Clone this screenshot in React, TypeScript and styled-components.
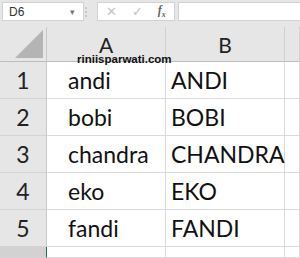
import styled, { createGlobalStyle } from "styled-components";

const rows = [
  ["andi", "ANDI"],
  ["bobi", "BOBI"],
  ["chandra", "CHANDRA"],
  ["eko", "EKO"],
  ["fandi", "FANDI"],
];

function App() {
  return (
    <Sheet>
      <GlobalStyle />
      <FormulaBar>
        <NameBox>
          <span>D6</span>
          <Caret>▾</Caret>
        </NameBox>
        <Grip />
        <ButtonBox>
          <BarIcon>✕</BarIcon>
          <BarIcon>✓</BarIcon>
          <FxIcon>
            f<sub>x</sub>
          </FxIcon>
        </ButtonBox>
        <FormulaInput />
      </FormulaBar>
      <Grid>
        <Corner>
          <Triangle />
        </Corner>
        <ColHead>A</ColHead>
        <ColHead>B</ColHead>
        <ColHead />
        {rows.map((r, i) => (
          <Row key={i}>
            <RowHead>{i + 1}</RowHead>
            <Cell indent>{r[0]}</Cell>
            <Cell>{r[1]}</Cell>
            <Cell />
          </Row>
        ))}
        <RowHead selected />
        <Cell />
        <Cell />
        <Cell />
      </Grid>
      <Watermark>riniisparwati.com</Watermark>
    </Sheet>
  );
}

export default App;

const GlobalStyle = createGlobalStyle`
  body {
    margin: 0;
    background: #fff;
  }
`;

const Sheet = styled.div`
  position: relative;
  width: 300px;
  height: 258px;
  overflow: hidden;
  background: #fff;
  font-family: Lato, "Liberation Sans", sans-serif;
`;

const FormulaBar = styled.div`
  height: 27px;
  box-sizing: border-box;
  background: #e6e6e6;
  display: flex;
  align-items: flex-start;
  padding: 2px 0 0 2px;
`;

const NameBox = styled.div`
  width: 82px;
  height: 19px;
  box-sizing: border-box;
  background: #fff;
  border: 1px solid #d2d2d2;
  display: flex;
  align-items: center;
  justify-content: space-between;
  padding: 0 8px 0 6px;
  font-family: "Liberation Sans", Arial, sans-serif;
  font-size: 12px;
  color: #333;
`;

const Caret = styled.span`
  font-size: 9px;
  color: #777;
`;

const Grip = styled.div`
  width: 2px;
  height: 10px;
  margin: 5px 8px 0 1px;
  border-left: 2px dotted #c8c8c8;
`;

const ButtonBox = styled.div`
  width: 78px;
  height: 19px;
  box-sizing: border-box;
  background: #fff;
  border: 1px solid #d2d2d2;
  display: flex;
  align-items: center;
  gap: 15px;
  padding-left: 8px;
`;

const BarIcon = styled.span`
  font-family: "DejaVu Sans", sans-serif;
  font-size: 13px;
  color: #c4c4c4;
`;

const FxIcon = styled.span`
  font-family: "Liberation Serif", serif;
  font-style: italic;
  font-weight: bold;
  font-size: 12px;
  color: #666;
  sub {
    font-size: 8px;
  }
`;

const FormulaInput = styled.div`
  flex: 1;
  height: 19px;
  margin-left: 3px;
  box-sizing: border-box;
  background: #fff;
  border: 1px solid #d2d2d2;
  border-right: none;
`;

const Grid = styled.div`
  display: grid;
  grid-template-columns: 47px 119px 119px 1fr;
  grid-template-rows: 35px repeat(5, 37px) 1fr;
  height: 231px;
`;

const Row = styled.div`
  display: contents;
`;

const Corner = styled.div`
  background: #e6e6e6;
  border-right: 1px solid #c8c8c8;
  border-bottom: 1px solid #bdbdbd;
  position: relative;
`;

const Triangle = styled.div`
  position: absolute;
  right: 3px;
  bottom: 3px;
  width: 28px;
  height: 28px;
  background: #b4b4b4;
  clip-path: polygon(100% 0, 100% 100%, 0 100%);
`;

const ColHead = styled.div`
  background: #e6e6e6;
  border-right: 1px solid #d0d0d0;
  border-bottom: 1px solid #bdbdbd;
  display: flex;
  align-items: flex-end;
  justify-content: center;
  padding-bottom: 6px;
  box-sizing: border-box;
  font-size: 21px;
  line-height: 1;
  color: #222;
`;

const RowHead = styled.div<{ selected?: boolean }>`
  background: ${(p) => (p.selected ? "#d2d2d2" : "#e6e6e6")};
  border-right: 1px solid ${(p) => (p.selected ? "#217346" : "#c8c8c8")};
  border-bottom: 1px solid #d4d4d4;
  display: flex;
  align-items: flex-end;
  justify-content: center;
  padding-bottom: 4px;
  box-sizing: border-box;
  font-size: 23px;
  color: #222;
`;

const Cell = styled.div<{ indent?: boolean }>`
  border-right: 1px solid #dadada;
  border-bottom: 1px solid #dadada;
  display: flex;
  align-items: flex-end;
  padding: 0 0 4px ${(p) => (p.indent ? "21px" : "5px")};
  box-sizing: border-box;
  font-size: 23px;
  color: #111;
  white-space: nowrap;
`;

const Watermark = styled.div`
  position: absolute;
  left: 77px;
  top: 54px;
  font-family: "Liberation Sans", Arial, sans-serif;
  font-weight: bold;
  font-size: 11.5px;
  line-height: 1;
  color: #111;
`;
